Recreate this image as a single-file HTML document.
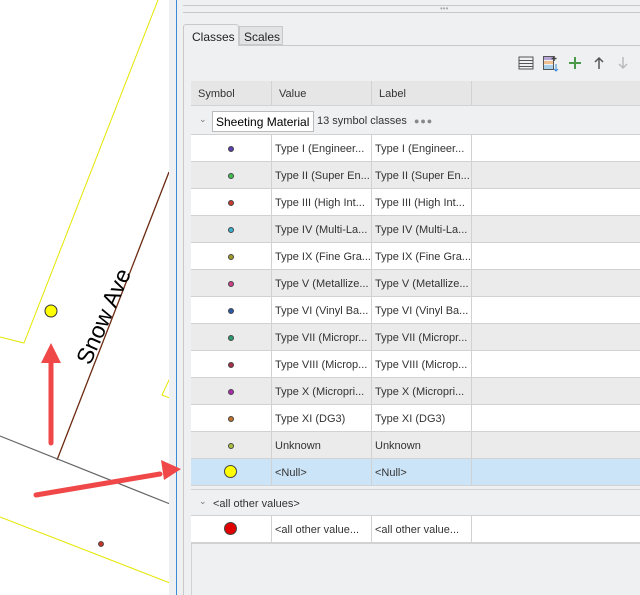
<!DOCTYPE html>
<html><head><style>
*{margin:0;padding:0;box-sizing:border-box}
body{width:640px;height:595px;overflow:hidden;position:relative;background:#fff;font-family:"Liberation Sans",sans-serif;font-size:11px;color:#222}
.abs{position:absolute}
#panel{left:169px;top:0;width:471px;height:595px;background:#eff0f1}
.row{position:absolute;left:191px;width:449px;height:27px;border-bottom:1px solid #d2d2d2}
.c{position:absolute;top:0;height:27px;line-height:28px;border-right:1px solid #d2d2d2;white-space:nowrap;overflow:hidden;font-size:11px;color:#333}
.c1{left:0;width:81px}.c2{left:81px;width:100px;padding-left:3px}.c3{left:181px;width:100px;padding-left:3px}
.dot{position:absolute;left:37px;top:11px;width:6px;height:6px;border-radius:50%;border:1px solid #444}
</style></head><body>
<svg class="abs" style="left:0;top:0" width="170" height="595">
<polyline points="158,0 24,343 0,337" fill="none" stroke="#e6e600" stroke-width="1"/>
<polyline points="0,517 170,583" fill="none" stroke="#e6e600" stroke-width="1"/>
<polyline points="170,378 162,395 170,398" fill="none" stroke="#e6e600" stroke-width="1"/>
<line x1="169" y1="172" x2="57" y2="460" stroke="#6b2a10" stroke-width="1.3"/>
<line x1="0" y1="436" x2="170" y2="504" stroke="#666" stroke-width="1.2"/>
<circle cx="51" cy="311" r="6" fill="#ffff00" stroke="#333" stroke-width="1"/>
<circle cx="101" cy="544" r="2.5" fill="#c0392b" stroke="#333" stroke-width="0.8"/>
<text x="0" y="0" transform="translate(90,366) rotate(-66)" font-family="Liberation Sans" font-size="23" fill="#000">Snow Ave</text>
<line x1="51" y1="443" x2="51" y2="360" stroke="#f04848" stroke-width="5" stroke-linecap="round"/>
<polygon points="51,343 41,363 61,363" fill="#f04848"/>
<line x1="36" y1="495" x2="160" y2="474" stroke="#f04848" stroke-width="5" stroke-linecap="round"/>
</svg>
<div class="abs" id="panel"></div>
<div class="abs" style="left:176px;top:0;width:1px;height:595px;background:#3a8ad6"></div>
<div class="abs" style="left:183px;top:5px;width:457px;height:1px;background:#c8c8c8"></div>
<div class="abs" style="left:183px;top:12px;width:457px;height:1px;background:#c8c8c8"></div>
<div class="abs" style="left:440px;top:7px;width:20px;height:4px;color:#aaa;font-size:8px;line-height:4px">•••</div>
<div class="abs" style="left:183px;top:45px;width:457px;height:550px;border-left:1px solid #c9c9c9;border-top:1px solid #c9c9c9;background:#eff0f1"></div>
<div class="abs" style="left:183px;top:24px;width:56px;height:22px;border:1px solid #c9c9c9;border-bottom:none;background:#eff0f1;border-radius:3px 3px 0 0;padding:5px 0 0 8px;font-size:12px">Classes</div>
<div class="abs" style="left:239px;top:26px;width:44px;height:19px;border:1px solid #c9c9c9;background:#e2e3e4;padding:3px 0 0 4px;font-size:12px">Scales</div>
<svg class="abs" style="left:515px;top:54px" width="125" height="20">
<rect x="4" y="3" width="14" height="12" fill="none" stroke="#555" stroke-width="1"/>
<line x1="4" y1="6.5" x2="18" y2="6.5" stroke="#555"/><line x1="4" y1="9.5" x2="18" y2="9.5" stroke="#555"/><line x1="4" y1="12.5" x2="18" y2="12.5" stroke="#555"/>
<rect x="29" y="3" width="9" height="3" fill="#b6a4d6"/><rect x="29" y="7" width="9" height="3" fill="#f0c090"/><rect x="29" y="11" width="9" height="4" fill="#a8d0ec"/>
<rect x="28.5" y="2.5" width="10" height="13" fill="none" stroke="#555"/>
<path d="M39 2v5M36.5 4.5h5" stroke="#444" stroke-width="1.5"/>
<path d="M41 10v7M39 15l2 2 2-2" stroke="#3a8ad6" fill="none"/>
<path d="M60 3v12M54 9h12" stroke="#4a9a4a" stroke-width="2"/>
<path d="M84 15V4M80 8l4-4 4 4" stroke="#555" stroke-width="1.5" fill="none"/>
<path d="M108 3v11M104 10l4 4 4-4" stroke="#bbb" stroke-width="1.5" fill="none"/>
</svg>
<svg class="abs" style="left:555px;top:80px" width="40" height="225">
<line x1="11" y1="215" x2="23" y2="25" stroke="#f04848" stroke-width="5" stroke-linecap="round"/>
<polygon points="24,4 14,24 33,25" fill="#f04848"/>
</svg>
<svg class="abs" style="left:150px;top:455px" width="40" height="30"><polygon points="31,14 11,5 14,25" fill="#f04848"/></svg>
<div class="abs" style="left:191px;top:81px;width:449px;height:463px;background:#fff;border-left:1px solid #d2d2d2"></div>
<div class="row" style="top:81px;height:25px;background:#e6e6e6">
<div class="c c1" style="height:25px;line-height:27px;padding-left:7px">Symbol</div><div class="c c2" style="height:25px;line-height:27px;padding-left:7px">Value</div><div class="c c3" style="height:25px;line-height:27px;padding-left:7px">Label</div></div>
<div class="row" style="top:106px;height:29px;background:#eff0f1;border-bottom:1px solid #d2d2d2">
<span class="abs" style="left:8px;top:8px;color:#777;font-size:9px">&#8964;</span>
<span class="abs" style="left:21px;top:5px;height:21px;width:102px;border:1px solid #bbb;background:#fff;padding:3px 3px;font-size:12px;color:#000;white-space:nowrap">Sheeting Material</span>
<span class="abs" style="left:126px;top:9px;font-size:11px;color:#333">13 symbol classes <b style="color:#888;letter-spacing:1px;margin-left:4px;font-size:9px">●●●</b></span></div>
<div class="row" style="top:135px;background:#fff"><div class="c c1"><span class="dot" style="background:#5b3fb0"></span></div><div class="c c2">Type I (Engineer...</div><div class="c c3">Type I (Engineer...</div></div>
<div class="row" style="top:162px;background:#ebebeb"><div class="c c1"><span class="dot" style="background:#3fbf4f"></span></div><div class="c c2">Type II (Super En...</div><div class="c c3">Type II (Super En...</div></div>
<div class="row" style="top:189px;background:#fff"><div class="c c1"><span class="dot" style="background:#c83a2a"></span></div><div class="c c2">Type III (High Int...</div><div class="c c3">Type III (High Int...</div></div>
<div class="row" style="top:216px;background:#ebebeb"><div class="c c1"><span class="dot" style="background:#3ab0d0"></span></div><div class="c c2">Type IV (Multi-La...</div><div class="c c3">Type IV (Multi-La...</div></div>
<div class="row" style="top:243px;background:#fff"><div class="c c1"><span class="dot" style="background:#a09a2a"></span></div><div class="c c2">Type IX (Fine Gra...</div><div class="c c3">Type IX (Fine Gra...</div></div>
<div class="row" style="top:270px;background:#ebebeb"><div class="c c1"><span class="dot" style="background:#d0408a"></span></div><div class="c c2">Type V (Metallize...</div><div class="c c3">Type V (Metallize...</div></div>
<div class="row" style="top:297px;background:#fff"><div class="c c1"><span class="dot" style="background:#2a5aa8"></span></div><div class="c c2">Type VI (Vinyl Ba...</div><div class="c c3">Type VI (Vinyl Ba...</div></div>
<div class="row" style="top:324px;background:#ebebeb"><div class="c c1"><span class="dot" style="background:#2a9a70"></span></div><div class="c c2">Type VII (Micropr...</div><div class="c c3">Type VII (Micropr...</div></div>
<div class="row" style="top:351px;background:#fff"><div class="c c1"><span class="dot" style="background:#a83048"></span></div><div class="c c2">Type VIII (Microp...</div><div class="c c3">Type VIII (Microp...</div></div>
<div class="row" style="top:378px;background:#ebebeb"><div class="c c1"><span class="dot" style="background:#b02ab0"></span></div><div class="c c2">Type X (Micropri...</div><div class="c c3">Type X (Micropri...</div></div>
<div class="row" style="top:405px;background:#fff"><div class="c c1"><span class="dot" style="background:#c0702a"></span></div><div class="c c2">Type XI (DG3)</div><div class="c c3">Type XI (DG3)</div></div>
<div class="row" style="top:432px;background:#ebebeb"><div class="c c1"><span class="dot" style="background:#a8c040"></span></div><div class="c c2">Unknown</div><div class="c c3">Unknown</div></div>
<div class="row" style="top:459px;background:#cce4f7"><div class="c c1"><span class="dot" style="background:#ffff00;width:13px;height:13px;left:33px;top:6px"></span></div><div class="c c2">&lt;Null&gt;</div><div class="c c3">&lt;Null&gt;</div></div>
<div class="row" style="top:486px;height:4px;background:#eff0f1;border-bottom:1px solid #d2d2d2"></div>
<div class="row" style="top:490px;height:26px;background:#eff0f1">
<span class="abs" style="left:8px;top:6px;color:#777;font-size:9px">&#8964;</span>
<span class="abs" style="left:22px;top:8px;color:#333">&lt;all other values&gt;</span></div>
<div class="row" style="top:516px;background:#fff"><div class="c c1"><span class="dot" style="background:#e00000;width:13px;height:13px;left:33px;top:6px"></span></div><div class="c c2">&lt;all other value...</div><div class="c c3">&lt;all other value...</div></div>
<div class="abs" style="left:191px;top:543px;width:449px;height:52px;background:#eff0f1;border-left:1px solid #d2d2d2;border-top:1px solid #d2d2d2"></div>
</body></html>
